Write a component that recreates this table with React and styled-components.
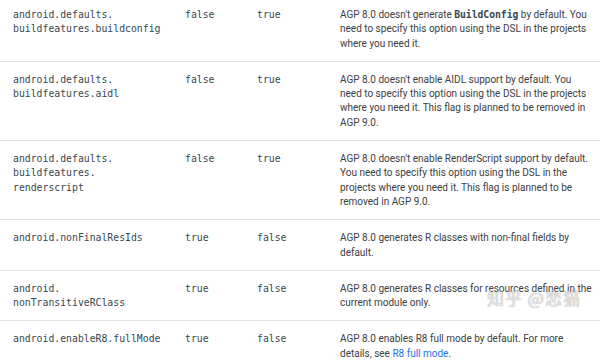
import React from "react";
import styled, { createGlobalStyle } from "styled-components";

const Global = createGlobalStyle`
  html, body { margin: 0; padding: 0; background: #fff; }
  body { width: 600px; height: 362px; overflow: hidden; }
`;

const Page = styled.div`
  position: relative;
  width: 600px;
  height: 362px;
  overflow: hidden;
  background: #fff;
`;

const Table = styled.div`
  margin-top: -3px;
  display: flex;
  flex-direction: column;
`;

const Row = styled.div`
  display: grid;
  grid-template-columns: 172px 72px 83px 254px;
  padding: 11px 0 10px 13px;
  border-bottom: ${(p) => (p.$last ? "none" : "1px solid #e4e4e4")};
  font-family: Roboto, "Noto Sans", sans-serif;
  font-size: 10px;
  line-height: 14.3px;
  color: #3c4043;
`;

const Code = styled.div`
  font-family: "DejaVu Sans Mono", "Liberation Mono", monospace;
  font-size: 9.8px;
  font-weight: 500;
  color: #37474f;
  max-width: ${(p) => (p.$name ? "150px" : "none")};
`;

const Desc = styled.div`
  color: #3c4043;
`;

const InlineCode = styled.code`
  font-family: "DejaVu Sans Mono", "Liberation Mono", monospace;
  font-size: 9.7px;
  font-weight: 600;
  color: #37474f;
`;

const Link = styled.a`
  color: #1a73e8;
  text-decoration: none;
`;

const Watermark = styled.div`
  position: absolute;
  left: 487px;
  top: 285px;
  font-family: "Noto Sans CJK SC", sans-serif;
  font-size: 17px;
  letter-spacing: 1px;
  color: rgba(255, 255, 255, 0.75);
  text-shadow: 0 0 1px rgba(110, 110, 110, 0.6), 0 0 1px rgba(110, 110, 110, 0.4);
  pointer-events: none;
`;

const dotted = (s) =>
  s.split(".").flatMap((part, i, arr) =>
    i < arr.length - 1 ? [part + ".", <wbr key={i} />] : [part]
  );

const rows = [
  {
    name: "android.defaults.buildfeatures.buildconfig",
    a: "false",
    b: "true",
    desc: (
      <>
        AGP 8.0 doesn't generate <InlineCode>BuildConfig</InlineCode> by default. You
        need to specify this option using the DSL in the projects where you need it.
      </>
    ),
  },
  {
    name: "android.defaults.buildfeatures.aidl",
    a: "false",
    b: "true",
    desc: "AGP 8.0 doesn't enable AIDL support by default. You need to specify this option using the DSL in the projects where you need it. This flag is planned to be removed in AGP 9.0.",
  },
  {
    name: "android.defaults.buildfeatures.renderscript",
    a: "false",
    b: "true",
    desc: "AGP 8.0 doesn't enable RenderScript support by default. You need to specify this option using the DSL in the projects where you need it. This flag is planned to be removed in AGP 9.0.",
  },
  {
    name: "android.nonFinalResIds",
    a: "true",
    b: "false",
    desc: "AGP 8.0 generates R classes with non-final fields by default.",
  },
  {
    name: "android.nonTransitiveRClass",
    a: "true",
    b: "false",
    desc: "AGP 8.0 generates R classes for resources defined in the current module only.",
  },
  {
    name: "android.enableR8.fullMode",
    a: "true",
    b: "false",
    desc: (
      <>
        AGP 8.0 enables R8 full mode by default. For more details, see{" "}
        <Link href="#">R8 full mode</Link>.
      </>
    ),
  },
];

export default function App() {
  return (
    <Page>
      <Global />
      <Table>
        {rows.map((r, i) => (
          <Row key={r.name} $last={i === rows.length - 1}>
            <Code $name>{dotted(r.name)}</Code>
            <Code>{r.a}</Code>
            <Code>{r.b}</Code>
            <Desc>{r.desc}</Desc>
          </Row>
        ))}
      </Table>
      <Watermark>知乎 @恋猫</Watermark>
    </Page>
  );
}
